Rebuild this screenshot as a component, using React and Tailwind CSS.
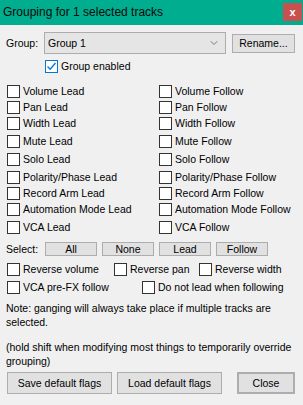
import { ChevronDown } from "lucide-react";

const rows = [
  ["Volume Lead", "Volume Follow", ""],
  ["Pan Lead", "Pan Follow", ""],
  ["Width Lead", "Width Follow", ""],
  ["Mute Lead", "Mute Follow", "mt-[2px]"],
  ["Solo Lead", "Solo Follow", "mt-[2px]"],
  ["Polarity/Phase Lead", "Polarity/Phase Follow", "mt-[2px]"],
  ["Record Arm Lead", "Record Arm Follow", ""],
  ["Automation Mode Lead", "Automation Mode Follow", ""],
  ["VCA Lead", "VCA Follow", "mt-[2px]"],
];

function Check({ label, checked, className = "" }) {
  return (
    <label className={`flex h-4 items-center gap-[3px] ${className}`}>
      <span
        className={`flex h-[13px] w-[13px] shrink-0 items-center justify-center border bg-white ${
          checked ? "border-[#0078d7]" : "border-[#333333]"
        }`}
      >
        {checked && (
          <svg width="11" height="11" viewBox="0 0 11 11">
            <path d="M1.5 5.5 L4.2 8.2 L9.5 2" fill="none" stroke="#0078d7" strokeWidth="1.3" />
          </svg>
        )}
      </span>
      <span className="whitespace-nowrap">{label}</span>
    </label>
  );
}

function Btn({ children, className = "" }) {
  return (
    <button
      className={`flex items-center justify-center border border-[#adadad] bg-[#e1e1e1] text-black ${className}`}
    >
      {children}
    </button>
  );
}

export default function App() {
  return (
    <div
      className="h-[405px] w-[303px] overflow-hidden bg-[#f0f0f0] text-[10.5px] leading-[14px] text-black"
      style={{ fontFamily: '"Liberation Sans", Arial, sans-serif' }}
    >
      <div className="flex h-[25px] justify-between bg-[#00ad8e]">
        <span className="pl-[3px] pt-[5px] text-[12px] leading-[15px] text-[#0a0a0a]">
          Grouping for 1 selected tracks
        </span>
        <span className="mr-[1px] mt-[3px] flex h-[18px] w-[19px] items-center justify-center bg-[#c75050] text-[11px] font-bold leading-none text-white">
          x
        </span>
      </div>

      <div className="pl-[6px]">
        <div className="mt-[7px] flex items-center">
          <span className="w-[38px]">Group:</span>
          <div className="flex h-[22px] w-[182px] items-center justify-between border border-[#adadad] bg-[#e5e5e5] pl-[3px] pr-[5px]">
            <span>Group 1</span>
            <ChevronDown className="h-[12px] w-[12px] text-[#555]" strokeWidth={1.5} />
          </div>
          <Btn className="ml-[6px] h-[19px] w-[63px]">Rename...</Btn>
        </div>

        <Check label="Group enabled" checked className="ml-[39px] mt-[4px]" />

        <div className="mt-[9px] grid grid-cols-[152px_1fr] pl-[1px]">
          {rows.map(([a, b, m]) => (
            <div key={a} className={`col-span-2 grid grid-cols-[152px_1fr] ${m}`}>
              <Check label={a} />
              <Check label={b} />
            </div>
          ))}
        </div>

        <div className="mt-[6px] flex h-4 items-center">
          <span className="w-[39px]">Select:</span>
          <div className="flex gap-[5px]">
            <Btn className="h-[14px] w-[52px]">All</Btn>
            <Btn className="h-[14px] w-[52px]">None</Btn>
            <Btn className="h-[14px] w-[52px]">Lead</Btn>
            <Btn className="h-[14px] w-[52px]">Follow</Btn>
          </div>
        </div>

        <div className="mt-[4px] flex pl-[1px]">
          <Check label="Reverse volume" className="w-[107px]" />
          <Check label="Reverse pan" className="w-[85px]" />
          <Check label="Reverse width" />
        </div>
        <div className="mt-[2px] flex pl-[1px]">
          <Check label="VCA pre-FX follow" className="w-[135px]" />
          <Check label="Do not lead when following" />
        </div>

        <p className="mt-[6px]">
          Note: ganging will always take place if multiple tracks are
          <br />
          selected.
        </p>
        <p className="mt-[11px]">
          (hold shift when modifying most things to temporarily override
          <br />
          grouping)
        </p>

        <div className="mt-[4px] flex pl-[1px]">
          <Btn className="h-[22px] w-[105px]">Save default flags</Btn>
          <Btn className="ml-[5px] h-[22px] w-[105px]">Load default flags</Btn>
          <Btn className="ml-[15px] h-[22px] w-[58px] border-2 border-[#0078d7]">Close</Btn>
        </div>
      </div>
    </div>
  );
}
